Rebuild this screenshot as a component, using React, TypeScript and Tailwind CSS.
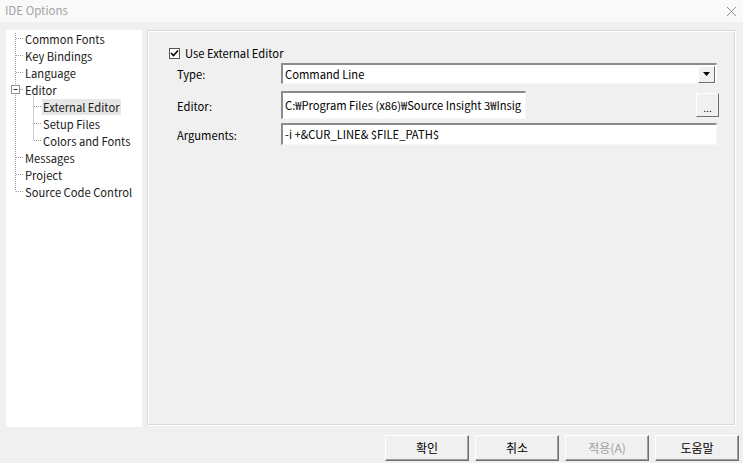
import React from 'react';

const font = { fontFamily: '"Noto Sans CJK KR", "Noto Sans", sans-serif' };

const treeItems = [
  { label: 'Common Fonts', level: 0 },
  { label: 'Key Bindings', level: 0 },
  { label: 'Language', level: 0 },
  { label: 'Editor', level: 0, open: true },
  { label: 'External Editor', level: 1, selected: true },
  { label: 'Setup Files', level: 1 },
  { label: 'Colors and Fonts', level: 1 },
  { label: 'Messages', level: 0 },
  { label: 'Project', level: 0 },
  { label: 'Source Code Control', level: 0 },
];

function TreeLines() {
  // dotted connectors of the tree view
  const dot = { stroke: '#a0a0a0', strokeWidth: 1, strokeDasharray: '1 1' };
  const rows = treeItems.map((_, i) => 8.5 + i * 17);
  return (
    <svg className="absolute left-0 top-0" width="60" height="200">
      <line x1="9.5" y1="3" x2="9.5" y2={rows[9]} {...dot} />
      {rows.map((y, i) =>
        treeItems[i].level === 0 ? (
          <line key={i} x1="10" y1={y} x2="18" y2={y} {...dot} />
        ) : (
          <line key={i} x1="28" y1={y} x2="36" y2={y} {...dot} />
        )
      )}
      <line x1="27.5" y1={rows[3] + 5} x2="27.5" y2={rows[6]} {...dot} />
      <rect x="5.5" y={rows[3] - 4} width="8" height="8" fill="#fff" stroke="#919191" />
      <line x1="7.5" y1={rows[3]} x2="11.5" y2={rows[3]} stroke="#333" />
    </svg>
  );
}

function Tree() {
  return (
    <div className="relative w-[136px] h-[397px] bg-white">
      <TreeLines />
      {treeItems.map((it) => (
        <div key={it.label} className="h-[17px] flex items-center">
          <span
            className={
              (it.level === 0 ? 'ml-[18px]' : 'ml-[36px]') +
              ' px-[1px] leading-[16px] text-[11.2px] text-[#1a1a1a] whitespace-nowrap ' +
              (it.selected ? 'bg-[#e6e6e6]' : '')
            }
          >
            {it.label}
          </span>
        </div>
      ))}
    </div>
  );
}

const sunken =
  'border-t-[2px] border-l-[2px] border-b-[1px] border-r-[1px] border-t-[#8c8c8c] border-l-[#8c8c8c] border-b-[#f8f8f8] border-r-[#f8f8f8] bg-white';

function Field({ children, className }: { children: React.ReactNode; className: string }) {
  return (
    <div className={sunken + ' ' + className + ' flex items-center pl-[2px] text-[11.2px] text-black overflow-hidden whitespace-nowrap'}>
      {children}
    </div>
  );
}

function Button({ label, disabled }: { label: string; disabled?: boolean }) {
  return (
    <div
      className={
        'w-[84px] h-[26px] flex items-center justify-center text-[12px] bg-[#f0f0f0] border border-t-white border-l-white border-b-[#6e6e6e] border-r-[#6e6e6e] shadow-[inset_-1px_-1px_0_#a0a0a0] ' +
        (disabled ? 'text-[#a0a0a0]' : 'text-black')
      }
    >
      {label}
    </div>
  );
}

export default function App() {
  return (
    <div className="w-[743px] h-[463px] bg-[#f0f0f0] overflow-hidden" style={font}>
      <div className="h-[22px] bg-[#f9f9f9] flex items-center justify-between pl-[5px] pr-[6px]">
        <span className="text-[11.5px] text-[#a3a3a3]">IDE Options</span>
        <svg width="11" height="11" viewBox="0 0 11 11">
          <path d="M1 1 L10 10 M10 1 L1 10" stroke="#8a8a8a" strokeWidth="1" />
        </svg>
      </div>
      <div className="flex pl-[6px] pt-[8px] gap-[5px]">
        <Tree />
        <div className="w-[589px] h-[396px] border border-t-[#d9d9d9] border-l-[#d9d9d9] border-b-white border-r-white">
          <div className="h-full border border-t-white border-l-white border-b-[#d9d9d9] border-r-[#d9d9d9] pl-[20px] pt-[13px]">
            <div className="flex items-center gap-[5px] h-[16px]">
              <div className="w-[11px] h-[11px] bg-white border border-[#555] flex items-center justify-center">
                <svg width="9" height="9" viewBox="0 0 9 9">
                  <path d="M1 4 L3.5 6.5 L8 1.5" stroke="#000" strokeWidth="1.6" fill="none" />
                </svg>
              </div>
              <span className="text-[11.2px] text-black">Use External Editor</span>
            </div>
            <div className="flex mt-[2px]">
              <div className="w-[112px] pl-[8px] flex flex-col text-[11.2px] text-black">
                <div className="h-[20px] flex items-center mt-[1px]">Type:</div>
                <div className="h-[28px] flex items-center mt-[8px]">Editor:</div>
                <div className="h-[22px] flex items-center mt-[4px]">Arguments:</div>
              </div>
              <div className="flex flex-col">
                <Field className="w-[436px] h-[21px] justify-between">
                  <span>Command Line</span>
                  <div className="w-[17px] h-[17px] mr-[1px] bg-[#f0f0f0] border border-t-white border-l-white border-b-[#6e6e6e] border-r-[#6e6e6e] flex items-center justify-center">
                    <svg width="7" height="4" viewBox="0 0 7 4">
                      <path d="M0 0 H7 L3.5 4 Z" fill="#000" />
                    </svg>
                  </div>
                </Field>
                <div className="flex items-center mt-[7px]">
                  <Field className="w-[245px] h-[28px]">C:₩Program Files (x86)₩Source Insight 3₩Insig</Field>
                  <div className="ml-[170px] w-[23px] h-[24px] flex items-end justify-center pb-[3px] text-[10px] leading-none bg-[#f0f0f0] border border-t-white border-l-white border-b-[#6e6e6e] border-r-[#6e6e6e]">
                    ...
                  </div>
                </div>
                <Field className="w-[436px] h-[22px] mt-[4px]">-i +&amp;CUR_LINE&amp; $FILE_PATH$</Field>
              </div>
            </div>
          </div>
        </div>
      </div>
      <div className="flex justify-end gap-[6px] pr-[4px] pt-[8px]">
        <Button label="확인" />
        <Button label="취소" />
        <Button label="적용(A)" disabled />
        <Button label="도움말" />
      </div>
    </div>
  );
}
